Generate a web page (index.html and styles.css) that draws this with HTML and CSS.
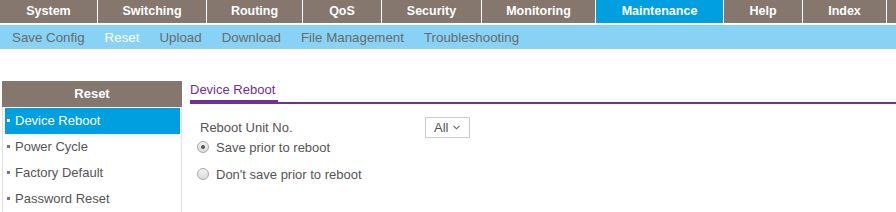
FILE: index.html
```html
<!DOCTYPE html>
<html lang="en">
<head>
    <meta charset="UTF-8">
    <title>Maintenance - Reset</title>
    <link rel="stylesheet" href="styles.css">
</head>
<body>
    <div class="topnav">
        <a href="#">System</a>
        <a href="#">Switching</a>
        <a href="#">Routing</a>
        <a href="#">QoS</a>
        <a href="#">Security</a>
        <a href="#">Monitoring</a>
        <a href="#" class="active">Maintenance</a>
        <a href="#">Help</a>
        <a href="#">Index</a>
        <span class="fill"></span>
    </div>
    <div class="subnav">
        <a href="#">Save Config</a>
        <a href="#" class="active">Reset</a>
        <a href="#">Upload</a>
        <a href="#">Download</a>
        <a href="#">File Management</a>
        <a href="#">Troubleshooting</a>
    </div>

    <div class="main">
        <div class="sidebar">
            <div class="side-title">Reset</div>
            <ul class="side-menu">
                <li class="active">Device Reboot</li>
                <li>Power Cycle</li>
                <li>Factory Default</li>
                <li>Password Reset</li>
            </ul>
        </div>

        <div class="content">
            <div class="tabs">
                <span class="tab-active">Device Reboot</span>
            </div>
            <div class="form">
                <div class="form-row">
                    <span class="label">Reboot Unit No.</span>
                    <span class="select-wrap">
                        <select class="unit-select">
                            <option>All</option>
                        </select>
                        <svg class="chevron" width="7" height="5" viewBox="0 0 7 5"><path d="M0.5 0.8 L3.5 3.8 L6.5 0.8" fill="none" stroke="#666" stroke-width="1.1"/></svg>
                    </span>
                </div>
                <label class="radio-row">
                    <input type="radio" name="save" checked>
                    <span>Save prior to reboot</span>
                </label>
                <label class="radio-row second">
                    <input type="radio" name="save">
                    <span>Don't save prior to reboot</span>
                </label>
            </div>
        </div>
    </div>
</body>
</html>
```

FILE: styles.css
```css
body {
    font-family: "Liberation Sans", Arial, sans-serif;
    font-size: 13px;
    margin: 0;
    padding: 0;
    background-color: #fff;
    color: #555;
}
.topnav {
    display: grid;
    grid-template-columns: 97px 108px 95px 78px 99px 113px 127px 78px 83px 1fr;
    column-gap: 1px;
    background-color: #fff;
    border-bottom: 2px solid #fff;
}
.topnav a, .topnav .fill {
    display: block;
    height: 23px;
    line-height: 23px;
    background-color: #85776e;
    color: #fff;
    font-size: 12.5px;
    font-weight: bold;
    text-align: center;
    text-decoration: none;
}
.topnav a.active {
    background-color: #009fdf;
}
.subnav {
    display: flex;
    height: 24px;
    align-items: center;
    padding-left: 2px;
    background-color: #88d3f5;
    font-size: 13.33px;
}
.subnav a {
    padding: 0 10px;
    color: #6a6a6a;
    text-decoration: none;
}
.subnav a.active {
    color: #fff;
}
.main {
    display: flex;
    align-items: flex-start;
}
.sidebar {
    width: 177px;
    margin-top: 32px;
    margin-left: 2px;
    padding: 0 1px 0 0;
    border-left: 1px solid #e2e2e2;
    border-right: 1px solid #e2e2e2;
    min-height: 140px;
}
.side-title {
    height: 26px;
    line-height: 26px;
    margin-left: -1px;
    margin-right: -2px;
    background-color: #85776e;
    color: #fff;
    font-weight: bold;
    text-align: center;
}
.side-menu {
    list-style: none;
    margin: 1px 0 0 2px;
    padding: 0;
}
.side-menu li {
    height: 26px;
    line-height: 25px;
    padding-left: 2px;
    color: #555;
}
.side-menu li::before {
    content: "";
    display: inline-block;
    width: 3px;
    height: 3px;
    margin-right: 5px;
    vertical-align: 3px;
    background-color: #777;
}
.side-menu li.active {
    background-color: #009fdf;
    color: #fff;
}
.side-menu li.active::before {
    background-color: #fff;
}
.content {
    flex: 1;
    margin-top: 33px;
    margin-left: 8px;
}
.tabs {
    border-bottom: 2px solid #70309a;
}
.tab-active {
    display: inline-block;
    line-height: 16px;
    padding: 0 3px 2px 0;
    margin-bottom: -2px;
    border-bottom: 4px solid #70309a;
    color: #70309a;
}
.form {
    padding-left: 10px;
    padding-top: 13px;
}
.form-row {
    display: flex;
    align-items: center;
    height: 21px;
}
.label {
    width: 225px;
}
.select-wrap {
    position: relative;
    display: inline-block;
}
.unit-select {
    appearance: none;
    -webkit-appearance: none;
    width: 45px;
    height: 21px;
    padding: 0 0 0 8px;
    border: 1px solid #ccc;
    border-radius: 0;
    background-color: #fff;
    font-family: "Liberation Sans", Arial, sans-serif;
    font-size: 13px;
    color: #555;
}
.chevron {
    position: absolute;
    top: 8px;
    left: 28px;
}
.radio-row {
    display: flex;
    align-items: center;
    height: 18px;
    margin-left: -3px;
}
.radio-row.second {
    margin-top: 9px;
}
.radio-row input {
    appearance: none;
    -webkit-appearance: none;
    width: 12px;
    height: 12px;
    margin: 0 7px 0 0;
    border: 1px solid #a8a8a8;
    border-radius: 50%;
    background: linear-gradient(#f2f2f2, #dcdcdc);
    box-sizing: border-box;
    position: relative;
}
.radio-row input:checked::after {
    content: "";
    position: absolute;
    left: 3px;
    top: 3px;
    width: 4px;
    height: 4px;
    border-radius: 50%;
    background-color: #555;
}
```
